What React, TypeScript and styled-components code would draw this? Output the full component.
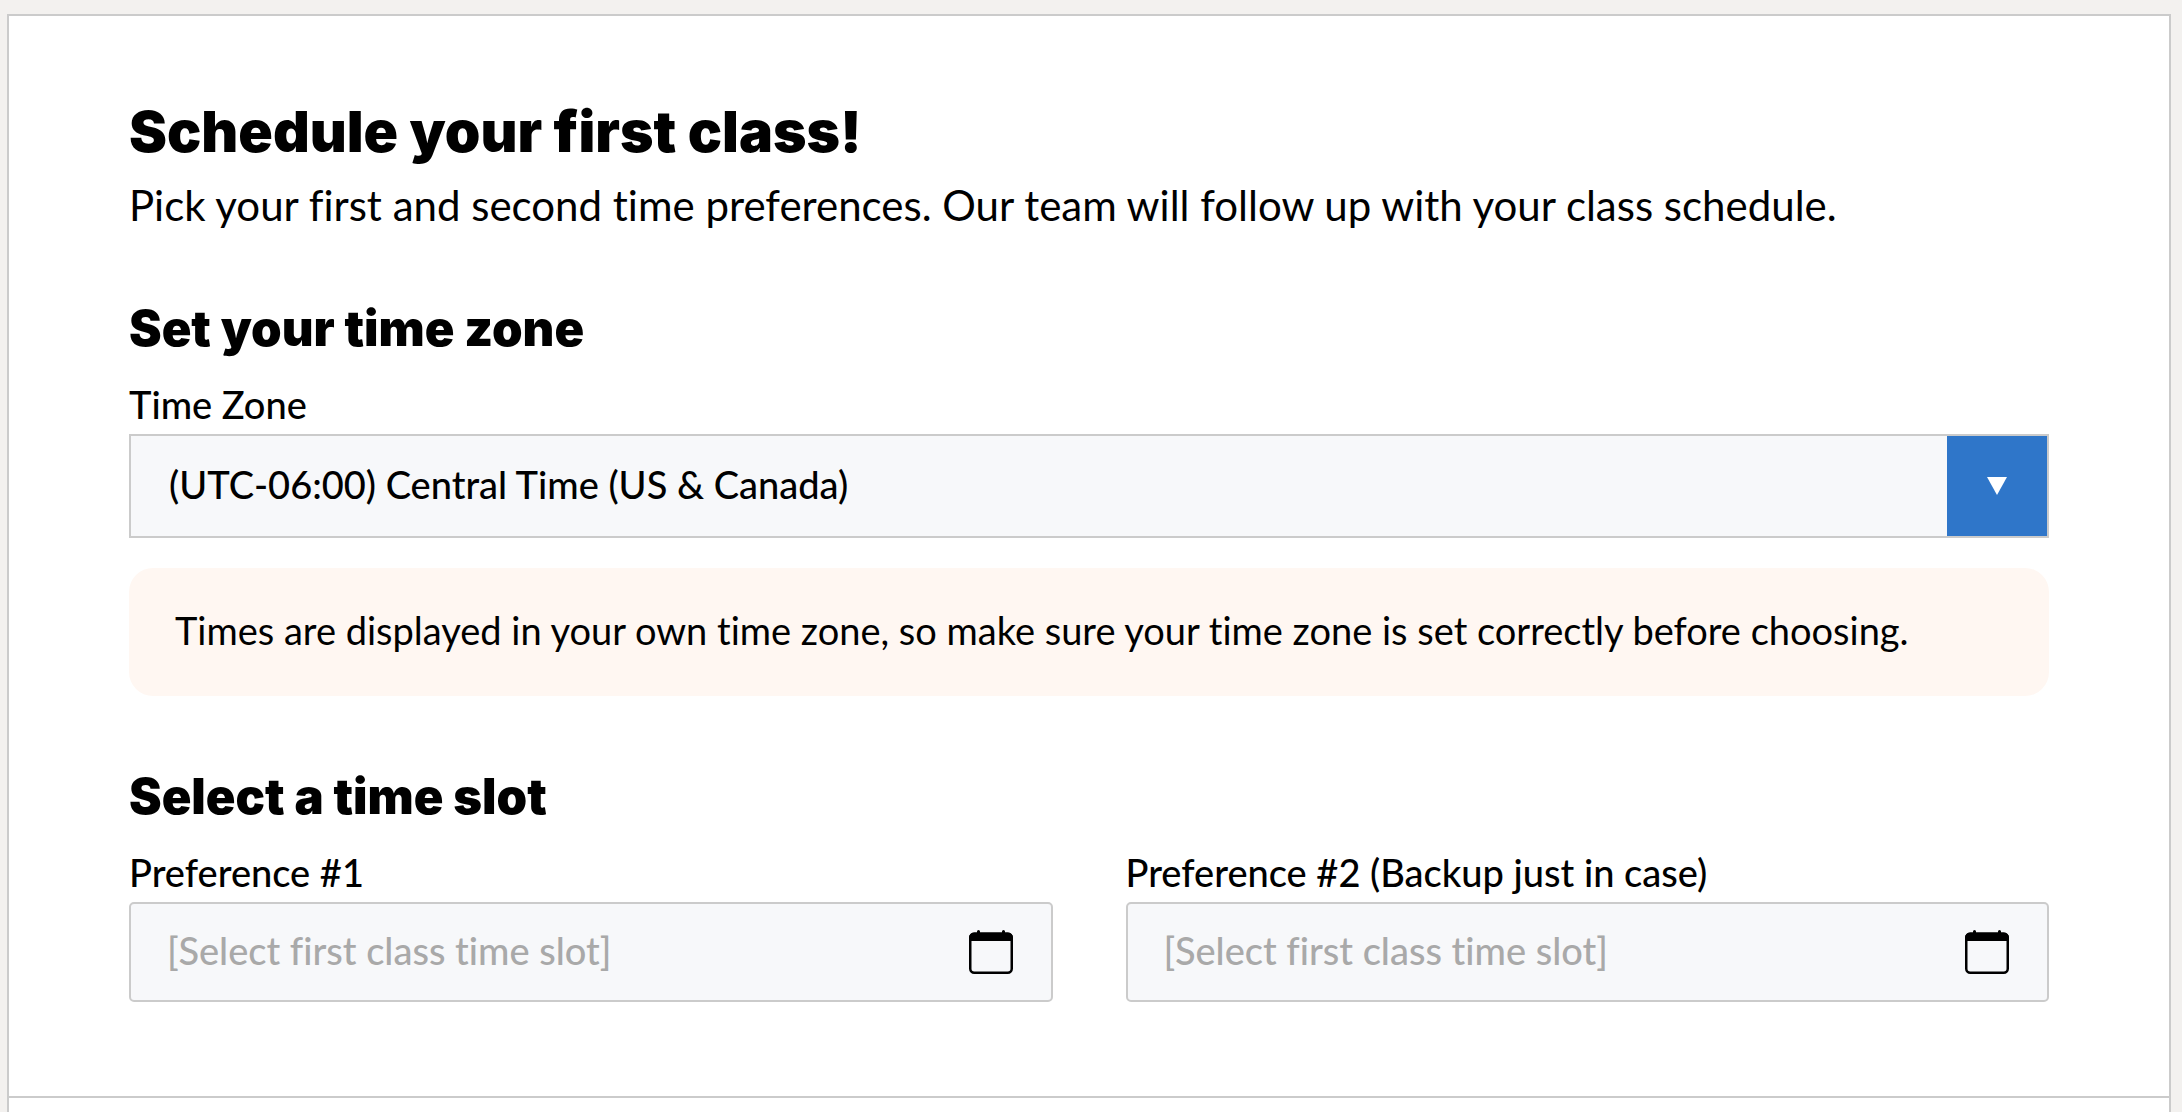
import React, { useState } from "react";
import styled, { createGlobalStyle } from "styled-components";

const GlobalStyle = createGlobalStyle`
  *, *::before, *::after {
    box-sizing: border-box;
  }

  body {
    margin: 0;
    background: #f3f1ef;
    color: #000;
    font-family: Lato, "Open Sans", sans-serif;
    font-variant-ligatures: none;
  }
`;

const Page = styled.main`
  display: flex;
  flex-direction: column;
  min-height: 100vh;
  padding: 14px 11px 0 7px;
`;

const Card = styled.div`
  flex: 1;
  display: flex;
  flex-direction: column;
  border: 2px solid #cbcbcb;
  border-bottom: 0;
  background: #fff;
`;

const Form = styled.form`
  padding: 80px 120px 94px;
  border-bottom: 2px solid #cbcbcb;
`;

const Title = styled.h1`
  margin: 0;
  font-family: Inter, "Open Sans", sans-serif;
  font-size: 57px;
  line-height: 72px;
  font-weight: 900;
`;

const Intro = styled.p`
  margin: 9px 0 0;
  font-size: 42px;
  line-height: 56px;
  font-weight: 400;
`;

const Section = styled.section<{ $gap: number }>`
  margin-top: ${({ $gap }) => $gap}px;
`;

const SectionTitle = styled.h2`
  margin: 0 0 21px;
  font-family: Inter, "Open Sans", sans-serif;
  font-size: 49px;
  line-height: 60px;
  font-weight: 900;
`;

const Label = styled.label`
  display: block;
  margin-bottom: 6px;
  font-size: 38px;
  line-height: 48px;
  font-weight: 500;
`;

const SelectBox = styled.div`
  position: relative;
  height: 104px;
  border: 2px solid #cbcbcb;
  background: #f7f8fa;
`;

const Select = styled.select`
  appearance: none;
  display: block;
  width: 100%;
  height: 100%;
  padding: 0 136px 4px 38px;
  border: 0;
  border-radius: 0;
  background: transparent;
  color: #000;
  font: 500 38px/48px Lato, "Open Sans", sans-serif;
  font-variant-ligatures: none;
`;

const SelectArrow = styled.span`
  position: absolute;
  inset: 0 0 0 auto;
  display: flex;
  align-items: center;
  justify-content: center;
  width: 100px;
  background: #2f76c9;
  pointer-events: none;
`;

const Notice = styled.p`
  margin: 30px 0 0;
  padding: 38px 46px 42px;
  border-radius: 24px;
  background: #fff7f2;
  font-size: 38px;
  line-height: 48px;
`;

const Slots = styled.div`
  display: grid;
  grid-template-columns: 1fr 1fr;
  gap: 73px;
`;

const SlotBox = styled.div`
  display: flex;
  align-items: center;
  height: 100px;
  padding: 0 38px 0 36px;
  border: 2px solid #cbcbcb;
  border-radius: 5px;
  background: #f7f8fa;
`;

const SlotInput = styled.input`
  flex: 1;
  min-width: 0;
  height: 100%;
  padding: 0 0 4px;
  border: 0;
  background: transparent;
  color: #000;
  font: 500 38px/48px Lato, "Open Sans", sans-serif;
  font-variant-ligatures: none;

  &::placeholder {
    color: #a9a9a9;
    opacity: 1;
  }
`;

const CalendarButton = styled.button`
  display: flex;
  padding: 0;
  border: 0;
  background: none;
  color: #000;
  cursor: pointer;
`;

const CalendarIcon = () => (
  <svg width="44" height="44" viewBox="0 0 44 44" fill="none" aria-hidden="true">
    <rect x="1.25" y="3.75" width="41.5" height="39" rx="4" stroke="currentColor" strokeWidth="2.5" />
    <path d="M0 11V7.5A5 5 0 0 1 5 2.5H39A5 5 0 0 1 44 7.5V11Z" fill="currentColor" />
    <path d="M9.5 1.5V5M34.5 1.5V5" stroke="currentColor" strokeWidth="3" strokeLinecap="round" />
  </svg>
);

const slots = [
  { id: "slot-1", label: "Preference #1" },
  { id: "slot-2", label: "Preference #2 (Backup just in case)" },
];

export default function App() {
  const [zone, setZone] = useState("central");

  return (
    <>
      <GlobalStyle />
      <Page>
        <Card>
          <Form>
            <Title>Schedule your first class!</Title>
            <Intro>
              Pick your first and second time preferences. Our team will follow up with your class schedule.
            </Intro>

            <Section $gap={66}>
              <SectionTitle>Set your time zone</SectionTitle>
              <Label htmlFor="time-zone">Time Zone</Label>
              <SelectBox>
                <Select id="time-zone" value={zone} onChange={(e) => setZone(e.target.value)}>
                  <option value="central">(UTC-06:00) Central Time (US &amp; Canada)</option>
                </Select>
                <SelectArrow>
                  <svg width="20" height="18" viewBox="0 0 20 18" aria-hidden="true">
                    <path d="M0 0H20L10 18Z" fill="#fff" />
                  </svg>
                </SelectArrow>
              </SelectBox>
              <Notice>
                Times are displayed in your own time zone, so make sure your time zone is set correctly before choosing.
              </Notice>
            </Section>

            <Section $gap={71}>
              <SectionTitle>Select a time slot</SectionTitle>
              <Slots>
                {slots.map(({ id, label }) => (
                  <div key={id}>
                    <Label htmlFor={id}>{label}</Label>
                    <SlotBox>
                      <SlotInput id={id} type="text" readOnly placeholder="[Select first class time slot]" />
                      <CalendarButton type="button" aria-label="Open calendar">
                        <CalendarIcon />
                      </CalendarButton>
                    </SlotBox>
                  </div>
                ))}
              </Slots>
            </Section>
          </Form>
        </Card>
      </Page>
    </>
  );
}
